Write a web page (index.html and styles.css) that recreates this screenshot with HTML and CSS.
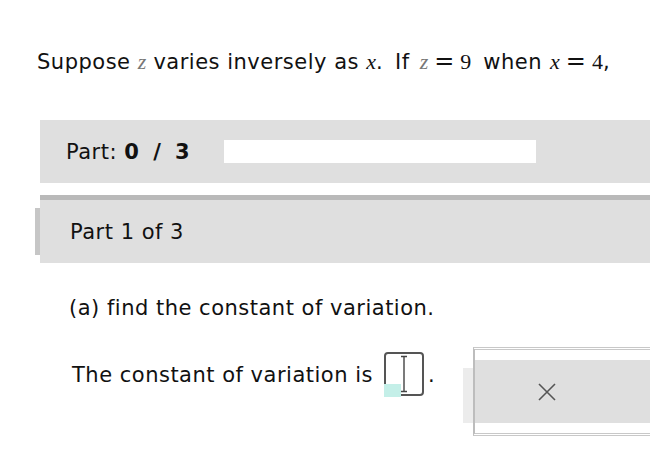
FILE: index.html
```html
<!DOCTYPE html>
<html>
<head>
<meta charset="utf-8">
<link rel="stylesheet" href="styles.css">
</head>
<body>
<div class="page">
  <p class="question">Suppose <span class="mv light">z</span> varies inversely as <span class="mv">x</span>.<span class="word-if">If</span><span class="mv light after-if">z</span><span class="mo">=</span><span class="mn">9</span><span class="word-when">when</span><span class="mv after-when">x</span><span class="mo">=</span><span class="mn">4</span>,</p>

  <div class="progress-box">
    <span class="progress-label">Part: <b>0 / 3</b></span>
    <div class="progress-bar"></div>
  </div>

  <div class="part-box">
    <span class="part-label">Part 1 of 3</span>
  </div>

  <p class="task">(a) find the constant of variation.</p>

  <div class="answer-row">
    <span class="answer-text">The constant of variation is</span>
    <span class="input-box">
      <span class="teal"></span>
      <svg class="ibeam" width="8" height="38" viewBox="0 0 8 38">
        <path d="M1 1.5h6M4 1.5v35M1 36.5h6" stroke="#444" stroke-width="1.4" fill="none"/>
      </svg>
    </span>
    <span class="period">.</span>
    <div class="keypad">
      <div class="keypad-inner">
        <svg class="xicon" width="20" height="20" viewBox="0 0 20 20">
          <path d="M2 2L18 18M18 2L2 18" stroke="#555" stroke-width="1.6" fill="none"/>
        </svg>
      </div>
    </div>
  </div>
</div>
</body>
</html>
```

FILE: styles.css
```css
html, body {
  margin: 0;
  padding: 0;
  background: #ffffff;
}

.page {
  font-family: "DejaVu Sans", Verdana, sans-serif;
  font-size: 21px;
  letter-spacing: 0.5px;
  color: #111;
  overflow: hidden;
  width: 650px;
  height: 457px;
}

.question {
  margin: 49px 0 0 37px;
  height: 24px;
  line-height: 24px;
  white-space: nowrap;
}

.word-if {
  margin-left: 12px;
}

.word-when {
  margin-left: 12px;
}

.mv {
  font-family: "Liberation Serif", "Times New Roman", serif;
  font-style: italic;
  font-size: 22px;
  letter-spacing: 0;
}

.mv.light {
  color: #777;
}

.mv.after-if {
  margin-left: 10px;
}

.mv.after-when {
  margin-left: 8px;
}

.mo {
  font-family: "DejaVu Serif", "Liberation Serif", serif;
  font-size: 24px;
  letter-spacing: 0;
  margin: 0 6px;
}

.mn {
  font-family: "Liberation Serif", "Times New Roman", serif;
  font-size: 22px;
  letter-spacing: 0;
}

.progress-box {
  margin: 47px 0 0 40px;
  height: 63px;
  background: #dfdfdf;
  display: flex;
  align-items: center;
  padding-left: 26px;
  gap: 34px;
}

.progress-label {
  white-space: nowrap;
}

.progress-label b {
  font-weight: bold;
  word-spacing: 6px;
}

.progress-bar {
  flex-shrink: 0;
  width: 312px;
  height: 23px;
  background: #ffffff;
}

.part-box {
  position: relative;
  margin: 12px 0 0 40px;
  height: 63px;
  border-top: 5px solid #b9b9b9;
  background: #dfdfdf;
  display: flex;
  align-items: center;
  padding-left: 30px;
}

.part-box::before {
  content: "";
  position: absolute;
  left: -5px;
  top: 8px;
  width: 5px;
  height: 47px;
  background: #c6c6c6;
}

.task {
  margin: 33px 0 0 69px;
  line-height: 24px;
}

.answer-row {
  display: flex;
  align-items: flex-start;
  margin: 27px 0 0 72px;
}

.answer-text {
  margin-top: 16px;
  line-height: 24px;
  white-space: nowrap;
  flex-shrink: 0;
}

.input-box {
  position: relative;
  flex-shrink: 0;
  box-sizing: border-box;
  width: 40px;
  height: 44px;
  border: 2px solid #555;
  border-radius: 4px;
  margin: 5px 0 0 11px;
  display: flex;
  align-items: center;
  justify-content: center;
}

.teal {
  position: absolute;
  left: -2px;
  bottom: -3px;
  width: 17px;
  height: 13px;
  background: #c4efe8;
}

.ibeam {
  position: relative;
}

.period {
  margin: 16px 0 0 4px;
  line-height: 24px;
  flex-shrink: 0;
}

.keypad {
  position: relative;
  flex-shrink: 0;
  margin-left: 38px;
  width: 200px;
  border-top: 3px double #c8c8c8;
  border-bottom: 3px double #c8c8c8;
  border-left: 2px solid #bdbdbd;
  padding: 10px 0;
}

.keypad::before {
  content: "";
  position: absolute;
  left: -12px;
  top: 18px;
  width: 10px;
  height: 55px;
  background: #ececec;
}

.keypad-inner {
  height: 63px;
  background: #dfdfdf;
  display: flex;
  align-items: center;
  padding-left: 62px;
}
```
